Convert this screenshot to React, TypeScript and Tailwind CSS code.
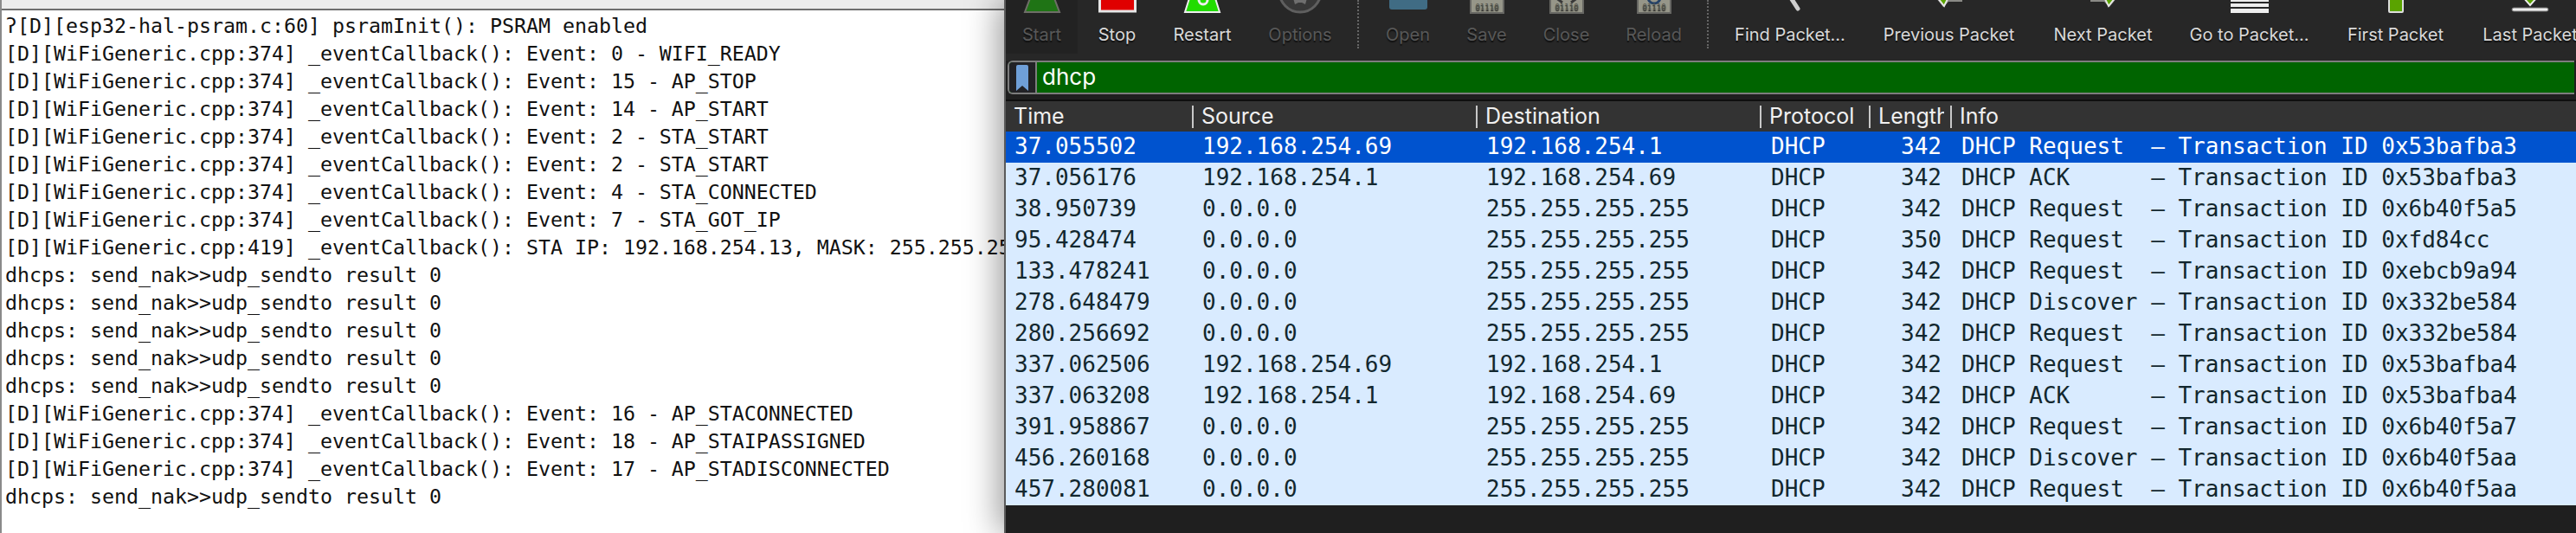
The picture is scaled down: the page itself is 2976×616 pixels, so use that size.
import React from 'react';

const logLines = [
  'ʔ[D][esp32-hal-psram.c:60] psramInit(): PSRAM enabled',
  '[D][WiFiGeneric.cpp:374] _eventCallback(): Event: 0 - WIFI_READY',
  '[D][WiFiGeneric.cpp:374] _eventCallback(): Event: 15 - AP_STOP',
  '[D][WiFiGeneric.cpp:374] _eventCallback(): Event: 14 - AP_START',
  '[D][WiFiGeneric.cpp:374] _eventCallback(): Event: 2 - STA_START',
  '[D][WiFiGeneric.cpp:374] _eventCallback(): Event: 2 - STA_START',
  '[D][WiFiGeneric.cpp:374] _eventCallback(): Event: 4 - STA_CONNECTED',
  '[D][WiFiGeneric.cpp:374] _eventCallback(): Event: 7 - STA_GOT_IP',
  '[D][WiFiGeneric.cpp:419] _eventCallback(): STA IP: 192.168.254.13, MASK: 255.255.255.0, GW: 192.168.254.1',
  'dhcps: send_nak>>udp_sendto result 0',
  'dhcps: send_nak>>udp_sendto result 0',
  'dhcps: send_nak>>udp_sendto result 0',
  'dhcps: send_nak>>udp_sendto result 0',
  'dhcps: send_nak>>udp_sendto result 0',
  '[D][WiFiGeneric.cpp:374] _eventCallback(): Event: 16 - AP_STACONNECTED',
  '[D][WiFiGeneric.cpp:374] _eventCallback(): Event: 18 - AP_STAIPASSIGNED',
  '[D][WiFiGeneric.cpp:374] _eventCallback(): Event: 17 - AP_STADISCONNECTED',
  'dhcps: send_nak>>udp_sendto result 0',
];

const broadcast = '255.255.255.255';
const packets = [
  ['37.055502', '192.168.254.69', '192.168.254.1', '342', 'DHCP Request  – Transaction ID 0x53bafba3'],
  ['37.056176', '192.168.254.1', '192.168.254.69', '342', 'DHCP ACK      – Transaction ID 0x53bafba3'],
  ['38.950739', '0.0.0.0', broadcast, '342', 'DHCP Request  – Transaction ID 0x6b40f5a5'],
  ['95.428474', '0.0.0.0', broadcast, '350', 'DHCP Request  – Transaction ID 0xfd84cc'],
  ['133.478241', '0.0.0.0', broadcast, '342', 'DHCP Request  – Transaction ID 0xebcb9a94'],
  ['278.648479', '0.0.0.0', broadcast, '342', 'DHCP Discover – Transaction ID 0x332be584'],
  ['280.256692', '0.0.0.0', broadcast, '342', 'DHCP Request  – Transaction ID 0x332be584'],
  ['337.062506', '192.168.254.69', '192.168.254.1', '342', 'DHCP Request  – Transaction ID 0x53bafba4'],
  ['337.063208', '192.168.254.1', '192.168.254.69', '342', 'DHCP ACK      – Transaction ID 0x53bafba4'],
  ['391.958867', '0.0.0.0', broadcast, '342', 'DHCP Request  – Transaction ID 0x6b40f5a7'],
  ['456.260168', '0.0.0.0', broadcast, '342', 'DHCP Discover – Transaction ID 0x6b40f5aa'],
  ['457.280081', '0.0.0.0', broadcast, '342', 'DHCP Request  – Transaction ID 0x6b40f5aa'],
];

const columns = 'grid grid-cols-[216px_328px_328px_126px_94px_1fr]';

function Doc({ children }: { children?: React.ReactNode }) {
  return (
    <svg width="40" height="16" viewBox="0 0 40 16">
      <rect x="1" y="-4" width="38" height="19" fill="#a3a394" stroke="#6f6f6a" strokeWidth="2" />
      {children}
      <text x="20" y="11" textAnchor="middle" fontSize="9" fontFamily="DejaVu Sans Mono, monospace" fill="#5a5a50">
        01110
      </text>
    </svg>
  );
}

const icons: Record<string, React.ReactNode> = {
  Start: (
    <svg width="44" height="16" viewBox="0 0 44 16">
      <path d="M8 -2 L36 -2 L42 14 L2 14 Z" fill="#1f7d14" stroke="#77776f" strokeWidth="2" />
    </svg>
  ),
  Stop: (
    <svg width="44" height="16" viewBox="0 0 44 16">
      <rect x="1.5" y="-4" width="41" height="17" fill="#e00000" stroke="#e6e6e6" strokeWidth="3" />
    </svg>
  ),
  Restart: (
    <svg width="44" height="16" viewBox="0 0 44 16">
      <path d="M7 -2 L37 -2 L42 14 L2 14 Z" fill="#22dc00" stroke="#eeeeee" strokeWidth="2" />
      <circle cx="23" cy="0" r="5" fill="none" stroke="#eeeeee" strokeWidth="3" />
    </svg>
  ),
  Options: (
    <svg width="48" height="16" viewBox="0 0 48 16">
      <circle cx="24" cy="-10" r="24" fill="#3a3a3a" stroke="#666666" strokeWidth="3" />
      <path d="M16 -2 L32 -2 L30 5 L26 3 L22 3 L18 5 Z" fill="#777777" />
    </svg>
  ),
  Open: (
    <svg width="44" height="16" viewBox="0 0 44 16">
      <rect x="0" y="-8" width="44" height="19" rx="3" fill="#43748f" />
    </svg>
  ),
  Save: <Doc />,
  Close: (
    <Doc>
      <path d="M7 -3 L15 3 M33 -3 L25 3" stroke="#3a3a3a" strokeWidth="3" />
    </Doc>
  ),
  Reload: (
    <Doc>
      <circle cx="20" cy="-3" r="7" fill="none" stroke="#25466f" strokeWidth="3" />
    </Doc>
  ),
  'Find Packet...': (
    <svg width="48" height="16" viewBox="0 0 48 16">
      <path d="M24 -4 L33 10" stroke="#cfcfcf" strokeWidth="5" strokeLinecap="round" />
    </svg>
  ),
  'Previous Packet': (
    <svg width="36" height="16" viewBox="0 0 36 16">
      <path d="M13 -3 H33 V2 H17 L11 8 L2 -3 Z" fill="#8a8a86" />
      <path d="M4 -3 L12 7 L17 -3 Z" fill="#5aa300" stroke="#e6e6e6" strokeWidth="2" />
    </svg>
  ),
  'Next Packet': (
    <svg width="36" height="16" viewBox="0 0 36 16">
      <path d="M23 -3 H3 V2 H19 L25 8 L34 -3 Z" fill="#8a8a86" />
      <path d="M32 -3 L24 7 L19 -3 Z" fill="#5aa300" stroke="#e6e6e6" strokeWidth="2" />
    </svg>
  ),
  'Go to Packet...': (
    <svg width="44" height="16" viewBox="0 0 44 16">
      <rect x="0" y="-1" width="44" height="3" fill="#eeeeee" />
      <rect x="0" y="4" width="44" height="4" fill="#eeeeee" />
      <rect x="0" y="10" width="44" height="5" fill="#eeeeee" />
    </svg>
  ),
  'First Packet': (
    <svg width="20" height="16" viewBox="0 0 20 16">
      <rect x="2" y="-4" width="16" height="18" rx="1" fill="#5aa300" stroke="#dddddd" strokeWidth="2" />
    </svg>
  ),
  'Last Packet': (
    <svg width="44" height="16" viewBox="0 0 44 16">
      <path d="M14 -3 L22 6 L30 -3 Z" fill="#5aa300" stroke="#eeeeee" strokeWidth="2" />
      <rect x="1" y="9" width="42" height="4" rx="2" fill="#eeeeee" stroke="#777777" strokeWidth="1" />
    </svg>
  ),
};

const tools = [
  { label: 'Start', w: 'w-[83px] bg-[#222222] h-[62px]', off: true },
  { label: 'Stop', w: 'w-[91px]' },
  { label: 'Restart', w: 'w-[106px]' },
  { label: 'Options', w: 'w-[120px]', off: true },
  { sep: 'w-[14px]' },
  { label: 'Open', w: 'w-[101px]', off: true },
  { label: 'Save', w: 'w-[81px]', off: true },
  { label: 'Close', w: 'w-[103px]', off: true },
  { label: 'Reload', w: 'w-[99px]', off: true },
  { sep: 'w-[26px]' },
  { label: 'Find Packet...', w: 'w-[164px]' },
  { label: 'Previous Packet', w: 'w-[203px]' },
  { label: 'Next Packet', w: 'w-[153px]' },
  { label: 'Go to Packet...', w: 'w-[185px]' },
  { label: 'First Packet', w: 'w-[153px]' },
  { label: 'Last Packet', w: 'w-[158px]' },
];

export default function App() {
  return (
    <div className="flex h-[616px] w-[2976px] overflow-hidden bg-white">
      {/* Serial monitor */}
      <div className="flex w-[1160px] shrink-0 flex-col overflow-hidden border-l-2 border-[#8a8a8a]">
        <div className="h-[10px] shrink-0 bg-[#ececec]" />
        <div className="h-[2px] shrink-0 bg-[#6e6e6e]" />
        <div className="pl-[4px] pt-[2px] font-['DejaVu_Sans_Mono',monospace] text-[23.25px] leading-[32px] text-[#111111]">
          {logLines.map((line, i) => (
            <div key={i} className="whitespace-pre">
              {line}
            </div>
          ))}
        </div>
      </div>

      {/* Wireshark */}
      <div className="relative flex min-w-0 flex-1 flex-col border-l-2 border-[#5a5a5a] bg-[#1f1f1f] shadow-[-6px_0_36px_rgba(0,0,0,0.4)]">
        <div className="flex h-[70px] shrink-0 overflow-hidden bg-[#272727] font-['Inter',sans-serif] text-[20px] [text-shadow:0_2px_1px_#111111]">
          {tools.map((t, i) =>
            t.sep ? (
              <div key={i} className={`flex h-[56px] shrink-0 justify-center ${t.sep}`}>
                <div className="h-full border-l-2 border-dotted border-[#666666]" />
              </div>
            ) : (
              <div key={i} className={`flex shrink-0 flex-col items-center ${t.w}`}>
                <div className={`flex h-[16px] items-start ${t.off ? 'opacity-90' : ''}`}>{icons[t.label!]}</div>
                <div className={`mt-[12px] whitespace-nowrap leading-[24px] ${t.off ? 'text-[#585858]' : 'text-[#d9d9d9]'}`}>
                  {t.label}
                </div>
              </div>
            ),
          )}
        </div>

        <div className="mx-[2px] flex h-[39px] shrink-0 overflow-hidden rounded-l-[6px] border-2 border-r-0 border-[#7d7d7d] bg-[#006400]">
          <div className="flex w-[32px] items-center justify-center border-r-2 border-[#7d7d7d] bg-[#222226]">
            <svg width="16" height="30" viewBox="0 0 16 30">
              <path d="M1 2 Q1 0 3 0 H13 Q15 0 15 2 V30 L8 24 L1 30 Z" fill="#6f9fd8" />
            </svg>
          </div>
          <div className="pl-[6px] font-['Inter',sans-serif] text-[26px] leading-[33px] text-white">dhcp</div>
        </div>

        <div className="mt-[6px] h-[2px] shrink-0 bg-[#0f0f0f]" />

        <div className={`${columns} h-[35px] shrink-0 bg-[#333333] font-['Inter',sans-serif] text-[25px] leading-[33px] text-[#f0f0f0]`}>
          {['Time', 'Source', 'Destination', 'Protocol', 'Length', 'Info'].map((h, i) => (
            <div key={h} className="flex min-w-0 items-center pl-[9px] pr-[8px]">
              {i > 0 && <div className="mr-[9px] ml-[-10px] h-[26px] w-[2px] shrink-0 bg-[#c8c8c8]" />}
              <span className="min-w-0 overflow-hidden whitespace-pre">{h}</span>
            </div>
          ))}
        </div>

        <div className="font-['DejaVu_Sans_Mono',monospace] text-[26px] leading-[34px]">
          {packets.map((p, i) => (
            <div key={p[0]} className={`${columns} h-[36px] ${i === 0 ? 'bg-[#0053cf] text-white' : 'bg-[#d9ebff] text-[#12272e]'}`}>
              <div className="pl-[10px]">{p[0]}</div>
              <div className="pl-[11px]">{p[1]}</div>
              <div className="pl-[11px]">{p[2]}</div>
              <div className="pl-[12px]">DHCP</div>
              <div className="pr-[11px] text-right">{p[3]}</div>
              <div className="whitespace-pre pl-[12px]">{p[4]}</div>
            </div>
          ))}
        </div>
      </div>
    </div>
  );
}
